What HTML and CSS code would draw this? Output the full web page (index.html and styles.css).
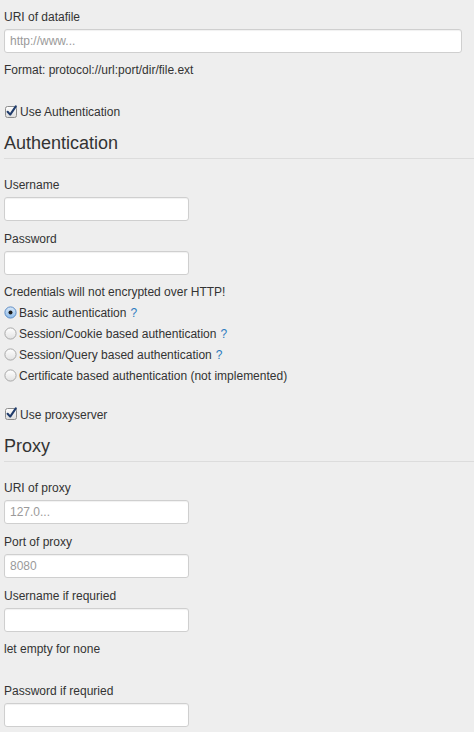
FILE: index.html
```html
<!DOCTYPE html>
<html lang="en">
<head>
  <meta charset="UTF-8">
  <title>Datafile settings</title>
  <link rel="stylesheet" href="styles.css">
</head>
<body>
  <form class="settings">

    <div class="field">
      <label class="field-label" for="datafile">URI of datafile</label>
      <input type="text" id="datafile" class="text-input wide" placeholder="http://www...">
      <p class="help">Format: protocol://url:port/dir/file.ext</p>
    </div>

    <label class="check">
      <span class="box">
        <svg width="14" height="13" viewBox="0 0 14 13">
          <defs>
            <linearGradient id="boxfill" x1="0" y1="0" x2="0" y2="1">
              <stop offset="0" stop-color="#ffffff"/>
              <stop offset="1" stop-color="#dcdcdc"/>
            </linearGradient>
          </defs>
          <rect x="0.5" y="1.5" width="11" height="11" rx="2" fill="url(#boxfill)" stroke="#8c8c8c"/>
          <path d="M2.6 6.8 L5.2 9.6 L10.8 1.4" fill="none" stroke="#1f3b6b" stroke-width="2.1" stroke-linecap="round" stroke-linejoin="round"/>
        </svg>
      </span>
      Use Authentication
    </label>

    <h2 class="section-title">Authentication</h2>

    <div class="field">
      <label class="field-label" for="username">Username</label>
      <input type="text" id="username" class="text-input">
    </div>

    <div class="field">
      <label class="field-label" for="password">Password</label>
      <input type="password" id="password" class="text-input">
    </div>

    <p class="note">Credentials will not encrypted over HTTP!</p>

    <ul class="radios">
      <li>
        <span class="dot">
          <svg width="13" height="13" viewBox="0 0 13 13">
            <defs>
              <linearGradient id="onfill" x1="0" y1="0" x2="0" y2="1">
                <stop offset="0" stop-color="#d8e8f8"/>
                <stop offset="1" stop-color="#8dbbe9"/>
              </linearGradient>
            </defs>
            <circle cx="6.5" cy="6.5" r="5.6" fill="url(#onfill)" stroke="#5d8cc4"/>
            <circle cx="6.5" cy="6.5" r="2" fill="#1b1b1b"/>
          </svg>
        </span>
        Basic authentication <a class="hint" href="#">?</a>
      </li>
      <li>
        <span class="dot">
          <svg width="13" height="13" viewBox="0 0 13 13">
            <defs>
              <linearGradient id="offfill" x1="0" y1="0" x2="0" y2="1">
                <stop offset="0" stop-color="#ffffff"/>
                <stop offset="1" stop-color="#e2e2e2"/>
              </linearGradient>
            </defs>
            <circle cx="6.5" cy="6.5" r="5.6" fill="url(#offfill)" stroke="#a8a8a8"/>
          </svg>
        </span>
        Session/Cookie based authentication <a class="hint" href="#">?</a>
      </li>
      <li>
        <span class="dot">
          <svg width="13" height="13" viewBox="0 0 13 13">
            <circle cx="6.5" cy="6.5" r="5.6" fill="url(#offfill)" stroke="#a8a8a8"/>
          </svg>
        </span>
        Session/Query based authentication <a class="hint" href="#">?</a>
      </li>
      <li>
        <span class="dot">
          <svg width="13" height="13" viewBox="0 0 13 13">
            <circle cx="6.5" cy="6.5" r="5.6" fill="url(#offfill)" stroke="#a8a8a8"/>
          </svg>
        </span>
        Certificate based authentication (not implemented)
      </li>
    </ul>

    <label class="check spaced">
      <span class="box">
        <svg width="14" height="13" viewBox="0 0 14 13">
          <rect x="0.5" y="1.5" width="11" height="11" rx="2" fill="url(#boxfill)" stroke="#8c8c8c"/>
          <path d="M2.6 6.8 L5.2 9.6 L10.8 1.4" fill="none" stroke="#1f3b6b" stroke-width="2.1" stroke-linecap="round" stroke-linejoin="round"/>
        </svg>
      </span>
      Use proxyserver
    </label>

    <h2 class="section-title">Proxy</h2>

    <div class="field">
      <label class="field-label" for="proxyuri">URI of proxy</label>
      <input type="text" id="proxyuri" class="text-input" placeholder="127.0...">
    </div>

    <div class="field">
      <label class="field-label" for="proxyport">Port of proxy</label>
      <input type="text" id="proxyport" class="text-input" placeholder="8080">
    </div>

    <div class="field">
      <label class="field-label" for="proxyuser">Username if requried</label>
      <input type="text" id="proxyuser" class="text-input">
      <p class="help">let empty for none</p>
    </div>

    <div class="field">
      <label class="field-label" for="proxypass">Password if requried</label>
      <input type="password" id="proxypass" class="text-input">
    </div>

  </form>
</body>
</html>
```

FILE: styles.css
```css
* { box-sizing: border-box; }

html, body {
  margin: 0;
  background: #eeeeee;
}

body {
  font-family: "Liberation Sans", Helvetica, Arial, sans-serif;
  font-size: 12px;
  color: #333;
}

.settings {
  padding: 7.5px 0 0 4px;
}

.field + .field {
  margin-top: 9px;
}

.field-label {
  display: block;
  line-height: 18px;
  margin-bottom: 3px;
}

.text-input {
  display: block;
  width: 185px;
  height: 24px;
  padding: 0 5px;
  font-family: inherit;
  font-size: 12px;
  color: #555;
  background: #fff;
  border: 1px solid #cfcfcf;
  border-radius: 3px;
  box-shadow: inset 0 1px 1px rgba(0,0,0,0.06);
  outline: none;
}

.text-input.wide {
  width: 458px;
}

.text-input::placeholder {
  color: #9a9a9a;
}

.help {
  margin: 8px 0 24.5px;
  line-height: 18px;
}

.check {
  display: flex;
  align-items: center;
  height: 18px;
  line-height: 18px;
}

.check.spaced {
  margin-top: 19.5px;
}

.box {
  display: inline-flex;
  width: 14px;
  height: 13px;
  margin: 0 1px 0 1px;
  position: relative;
  top: -1px;
}

.section-title {
  font-size: 18px;
  font-weight: normal;
  line-height: 24px;
  color: #333;
  margin: 10px 0 17px;
  padding-bottom: 3px;
  border-bottom: 1px solid #dcdcdc;
}

.note {
  margin: 8px 0 1px;
  line-height: 18px;
}

.radios {
  list-style: none;
  margin: 0;
  padding: 0;
}

.radios li {
  display: flex;
  align-items: center;
  height: 21px;
}

.dot {
  display: inline-flex;
  width: 13px;
  height: 13px;
  margin: 0 1px 0 0;
}

.radios li .dot {
  margin-right: 2px;
}

.hint {
  color: #2c7cc0;
  text-decoration: none;
  margin-left: 4px;
}
```
